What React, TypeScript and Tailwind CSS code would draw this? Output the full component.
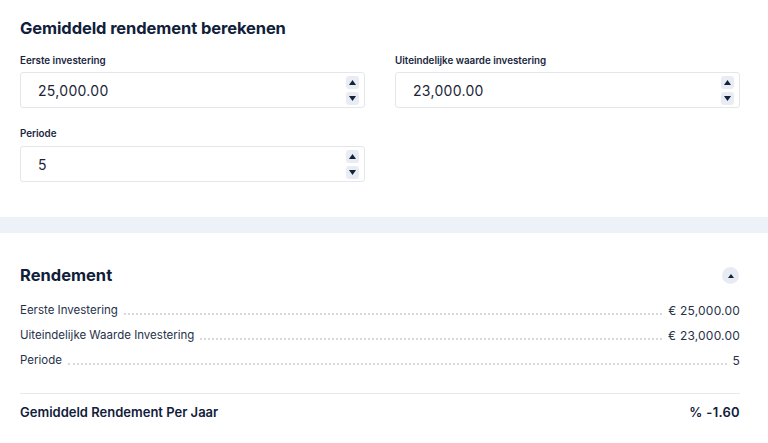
import React from 'react';

const FONT = { fontFamily: 'Inter, "Noto Sans", sans-serif' };

function Spinner() {
  return (
    <div className="flex flex-col gap-[3px]">
      <button className="flex h-[13px] w-[13px] items-center justify-center rounded-[3px] bg-[#e9edf3]">
        <svg width="7" height="5" viewBox="0 0 7 5">
          <path d="M3.5 0L7 5H0z" fill="#12233f" />
        </svg>
      </button>
      <button className="flex h-[13px] w-[13px] items-center justify-center rounded-[3px] bg-[#e9edf3]">
        <svg width="7" height="5" viewBox="0 0 7 5">
          <path d="M0 0h7L3.5 5z" fill="#12233f" />
        </svg>
      </button>
    </div>
  );
}

function NumberField({ label, value }: { label: string; value: string }) {
  return (
    <div>
      <label className="block text-[9.8px] font-semibold text-[#1a2640] mb-[4px]">{label}</label>
      <div className="flex h-[36px] items-center justify-between rounded-[3px] border border-[#e3e6eb] pl-[17px] pr-[5px]">
        <span className="text-[14px] text-[#1c2538] tracking-[0.3px]">{value}</span>
        <Spinner />
      </div>
    </div>
  );
}

function Row({ label, value }: { label: string; value: string }) {
  return (
    <div className="flex items-end gap-[6px] h-[25px]">
      <span className="text-[11.5px] text-[#27324a] leading-[15px]">{label}</span>
      <span className="flex-1 border-b-2 border-dotted border-[#d6d9df] mb-[3px]" />
      <span className="text-[12px] text-[#27324a] leading-[15px] tracking-[0.2px]">{value}</span>
    </div>
  );
}

export default function App() {
  return (
    <div className="w-[768px] h-[443px] bg-white overflow-hidden" style={FONT}>
      <div className="pl-[20px] pr-[28px] pt-[16px] pb-[35px]">
        <h1 className="text-[16.5px] font-bold text-[#10203a] tracking-[-0.1px]">Gemiddeld rendement berekenen</h1>
        <div className="mt-[13px] grid grid-cols-2 gap-x-[30px] gap-y-[19px]">
          <NumberField label="Eerste investering" value="25,000.00" />
          <NumberField label="Uiteindelijke waarde investering" value="23,000.00" />
          <NumberField label="Periode" value="5" />
        </div>
      </div>
      <div className="h-[16px] bg-[#edf1f8]" />
      <div className="pl-[20px] pr-[28px] pt-[30px]">
        <div className="flex items-center justify-between">
          <h2 className="text-[16.5px] font-bold text-[#10203a]">Rendement</h2>
          <button className="mr-[1px] flex h-[17px] w-[17px] items-center justify-center rounded-full bg-[#e8ecf2]">
            <svg width="6" height="4" viewBox="0 0 6 4">
              <path d="M3 0L6 4H0z" fill="#12233f" />
            </svg>
          </button>
        </div>
        <div className="mt-[5px]">
          <Row label="Eerste Investering" value="€ 25,000.00" />
          <Row label="Uiteindelijke Waarde Investering" value="€ 23,000.00" />
          <Row label="Periode" value="5" />
        </div>
        <div className="mt-[25px] border-t border-[#e6e8ec] pt-[9px] flex justify-between">
          <span className="text-[13px] font-semibold text-[#10203a]">Gemiddeld Rendement Per Jaar</span>
          <span className="text-[13px] font-semibold text-[#10203a] tracking-[0.3px]">% -1.60</span>
        </div>
      </div>
    </div>
  );
}
